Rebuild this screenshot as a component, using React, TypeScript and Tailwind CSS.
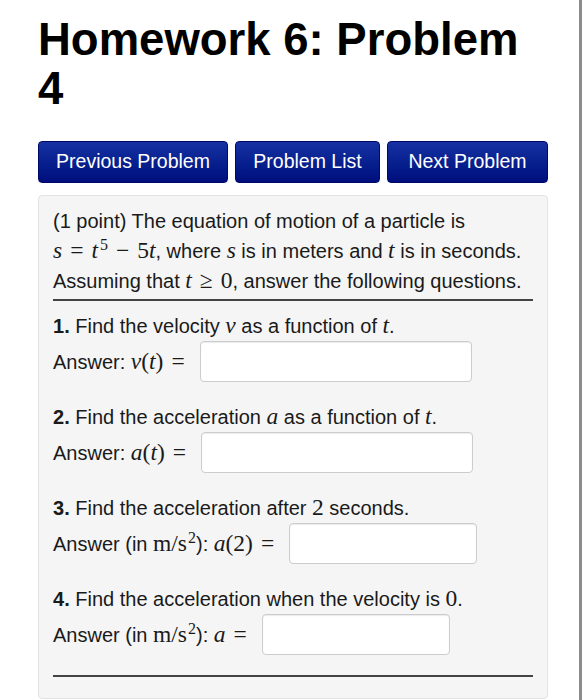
import type { ReactNode } from "react";

const math = "font-['Liberation_Serif',serif] text-[23.5px] leading-[20px]";

function V({ children }: { children: ReactNode }) {
  return <i className={math}>{children}</i>;
}

function N({ children }: { children: ReactNode }) {
  return <span className={math}>{children}</span>;
}

function Op({ children }: { children: ReactNode }) {
  return <span className={`${math} mx-[8px]`}>{children}</span>;
}

function Unit() {
  return (
    <span className={math}>
      m/s<sup className="text-[16px] ml-[1px]">2</sup>
    </span>
  );
}

function AnswerBox({ width }: { width: string }) {
  return (
    <div className={`${width} h-[41px] bg-white border border-[#cccccc] rounded-[4px] shadow-[inset_0_1px_1px_rgba(0,0,0,0.08)]`} />
  );
}

function Question({ num, text, label, box }: { num: string; text: ReactNode; label: ReactNode; box: string }) {
  return (
    <div className="mb-[20px]">
      <p className="leading-[30px]">
        <b>{num}.</b> {text}
      </p>
      <div className="flex items-center gap-[7px]">
        <span className="leading-[30px] whitespace-nowrap">{label}</span>
        <AnswerBox width={box} />
      </div>
    </div>
  );
}

export default function App() {
  return (
    <div className="flex min-h-[700px] bg-white font-['Liberation_Sans',Arial,sans-serif] text-[#1a1a1a]">
      <div className="w-[579px] pl-[38px] pr-[31px]">
        <h1 className="pt-[15px] text-[45.5px] font-bold leading-[49px] text-black">Homework 6: Problem 4</h1>

        <div className="mt-[28px] flex justify-between">
          {[
            ["Previous Problem", "w-[190px]"],
            ["Problem List", "w-[145px]"],
            ["Next Problem", "w-[161px]"],
          ].map(([label, w]) => (
            <button
              key={label}
              className={`${w} h-[42px] rounded-[4px] border border-[#000a66] bg-linear-to-b from-[#1731a3] to-[#000c7c] text-white text-[19.5px]`}
            >
              {label}
            </button>
          ))}
        </div>

        <div className="mt-[12px] bg-[#f5f5f5] border border-[#e3e3e3] rounded-[4px] px-[14px] pt-[10px] pb-[21px] text-[20px]">
          <p className="leading-[30px]">
            (1 point) The equation of motion of a particle is
            <br />
            <V>s</V>
            <Op>=</Op>
            <V>t</V>
            <sup className="font-['Liberation_Serif',serif] text-[16px] leading-[10px] ml-[2px]">5</sup>
            <Op>−</Op>
            <N>5</N>
            <V>t</V>, where <V>s</V> is in meters and <V>t</V> is in seconds.
            <br />
            Assuming that <V>t</V>
            <Op>≥</Op>
            <N>0</N>, answer the following questions.
          </p>
          <hr className="mt-[3px] mb-[10px] border-0 h-[2px] bg-[#444444]" />

          <Question
            num="1"
            text={<>Find the velocity <V>v</V> as a function of <V>t</V>.</>}
            label={<>Answer: <V>v</V><N>(</N><V>t</V><N>)</N><Op>=</Op></>}
            box="w-[272px]"
          />
          <Question
            num="2"
            text={<>Find the acceleration <V>a</V> as a function of <V>t</V>.</>}
            label={<>Answer: <V>a</V><N>(</N><V>t</V><N>)</N><Op>=</Op></>}
            box="w-[272px]"
          />
          <Question
            num="3"
            text={<>Find the acceleration after <N>2</N> seconds.</>}
            label={<>Answer (in <Unit />): <V>a</V><N>(2)</N><Op>=</Op></>}
            box="w-[188px]"
          />
          <Question
            num="4"
            text={<>Find the acceleration when the velocity is <N>0</N>.</>}
            label={<>Answer (in <Unit />): <V>a</V><Op>=</Op></>}
            box="w-[188px]"
          />

          <hr className="border-0 h-[2px] bg-[#444444]" />
        </div>
      </div>
      <div className="w-[3px] bg-[#8c8c8c]" />
    </div>
  );
}
